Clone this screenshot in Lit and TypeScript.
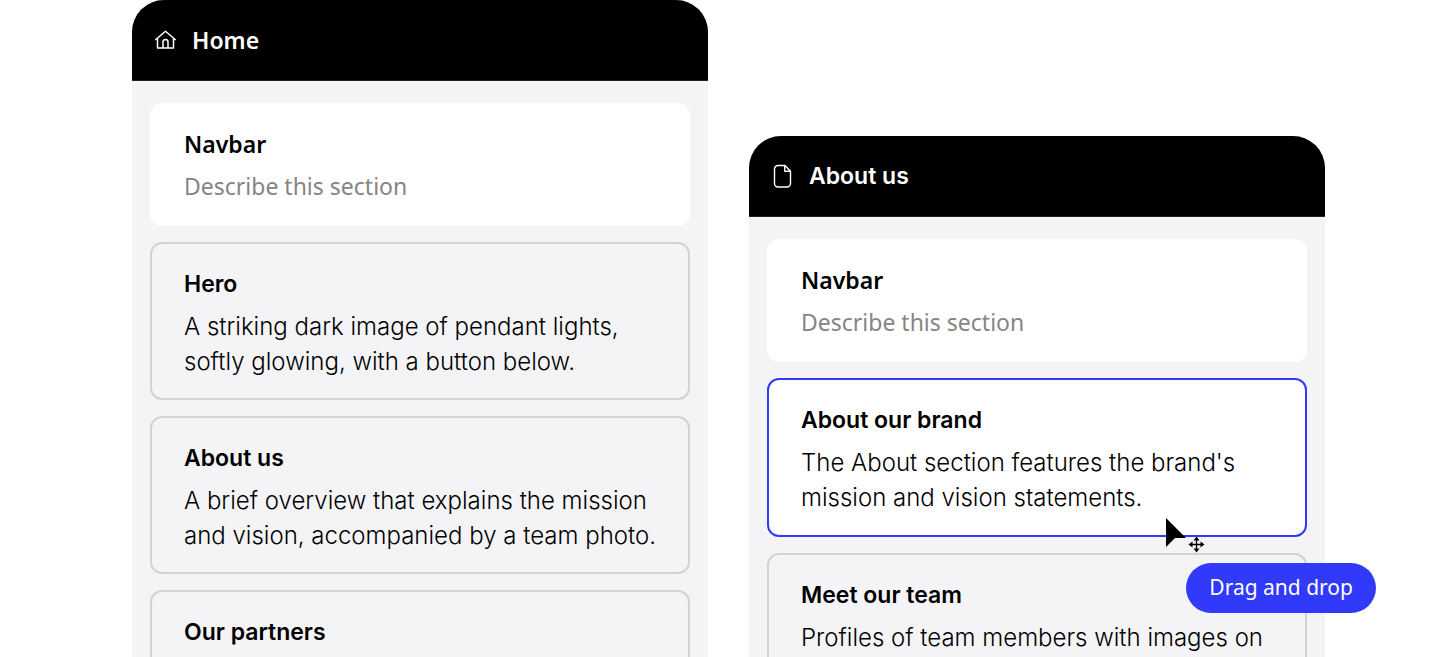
import { LitElement, html, css, svg, nothing } from "lit";
import { customElement, property } from "lit/decorators.js";
import { classMap } from "lit/directives/class-map.js";

interface Section {
  title: string;
  text?: string;
  state?: "empty" | "active";
}

const homeIcon = svg`<svg class="icon" viewBox="0 0 24 24" width="24" height="24" aria-hidden="true" fill="none" stroke="currentColor" stroke-width="1.5" stroke-linejoin="round">
  <path d="M1.300 12 11.500 3.200l10.200 8.800"/>
  <path d="M3.500 10.400v9.700h16v-9.700"/>
  <path d="M9 20.100v-6a2.500 2.500 0 0 1 5 0v6"/>
</svg>`;

const fileIcon = svg`<svg class="icon" viewBox="0 0 24 24" width="24" height="24" aria-hidden="true" fill="none" stroke="currentColor" stroke-width="1.400" stroke-linejoin="round">
  <path d="M14 1.500H7a3.500 3.500 0 0 0-3.500 3.500v14.500a3.500 3.500 0 0 0 3.500 3.500h9a3.500 3.500 0 0 0 3.500-3.500V7.300z"/>
  <path d="M13.700 1.500v5.800h5.800"/>
</svg>`;

@customElement("section-card")
class SectionCard extends LitElement {
  @property({ attribute: false }) section!: Section;

  static styles = css`
    :host {
      display: block;
    }
    .card {
      position: relative;
      box-sizing: border-box;
      padding: 22px 24px 19px 32px;
      border: 2px solid #d2d2d2;
      border-radius: 12px;
      color: #000;
      font: 350 24px/35px Inter, sans-serif;
    }
    .empty {
      padding-bottom: 20px;
      border-color: #fff;
      background: #fff;
      font-family: "Noto Sans", sans-serif;
      font-weight: 400;
    }
    .active {
      padding-bottom: 20px;
      border-color: #3139fb;
      background: #fff;
    }
    .title {
      margin: 0 0 6px;
      font-size: 23px;
      line-height: 37px;
      font-weight: 600;
    }
    .text {
      margin: 0;
    }
    .empty .title {
      margin-bottom: 7px;
      line-height: 35px;
    }
    .empty .text {
      color: #858585;
      font-size: 23px;
    }
  `;

  render() {
    const { title, text, state } = this.section;
    return html`<article class=${classMap({ card: true, empty: state === "empty", active: state === "active" })}>
      <h3 class="title">${title}</h3>
      ${text ? html`<p class="text">${text}</p>` : nothing}
      <slot></slot>
    </article>`;
  }
}

@customElement("app-root")
class AppRoot extends LitElement {
  static styles = css`
    :host {
      display: block;
      height: 100vh;
      overflow: hidden;
      background: #fff;
      font-family: Inter, sans-serif;
    }
    .board {
      display: grid;
      grid-template-columns: 1fr 1fr;
      gap: 41px;
      height: 100%;
      padding: 0 131px 0 132px;
      box-sizing: border-box;
    }
    .page {
      min-width: 0;
      background: #f4f4f6;
      border-radius: 32px 32px 0 0;
    }
    .lowered {
      margin-top: 136px;
    }
    .head {
      display: flex;
      align-items: center;
      gap: 14px;
      padding: 22px;
      border-bottom: 1px solid #222;
      border-radius: 32px 32px 0 0;
      background: #000;
      color: #fff;
    }
    .name {
      margin: 0;
      font-size: 23px;
      line-height: 36px;
      font-weight: 600;
    }
    .noto {
      font-family: "Noto Sans", sans-serif;
    }
    .icon {
      flex: none;
    }
    .list {
      display: flex;
      flex-direction: column;
      gap: 16px;
      padding: 22px 18px;
    }
    .drag {
      position: absolute;
      top: 138px;
      right: -71px;
      display: flex;
      flex-direction: column;
      z-index: 1;
    }
    .cursor {
      display: block;
      margin-left: -21px;
    }
    .pill {
      border: 0;
      border-radius: 25px;
      padding: 6px 23px 8px;
      background: #3139fb;
      color: #fff;
      font: 400 21px/36px "Noto Sans", sans-serif;
      white-space: nowrap;
    }
  `;

  private home: Section[] = [
    { title: "Navbar", text: "Describe this section", state: "empty" },
    { title: "Hero", text: "A striking dark image of pendant lights, softly glowing, with a button below." },
    { title: "About us", text: "A brief overview that explains the mission and vision, accompanied by a team photo." },
    { title: "Our partners" },
  ];

  private about: Section[] = [
    { title: "Navbar", text: "Describe this section", state: "empty" },
    { title: "About our brand", text: "The About section features the brand's mission and vision statements.", state: "active" },
    { title: "Meet our team", text: "Profiles of team members with images on" },
  ];

  private dragHint() {
    return html`<div class="drag">
      <svg class="cursor" viewBox="0 0 46 45" width="46" height="45" aria-hidden="true">
        <path d="M1 0v29l9-9h11z"/>
        <path d="M31.500 20v13M25 26.500h13" stroke="#000" stroke-width="1.300"/>
        <path d="M31.500 18.500l3 4h-6zM31.500 34.500l3-4h-6zM23.500 26.500l4-3v6zM39.500 26.500l-4-3v6z"/>
      </svg>
      <button class="pill" type="button">Drag and drop</button>
    </div>`;
  }

  private cards(sections: Section[]) {
    return html`<div class="list">
      ${sections.map((s) => html`<section-card .section=${s}>${s.state === "active" ? this.dragHint() : nothing}</section-card>`)}
    </div>`;
  }

  render() {
    return html`<main class="board">
      <section class="page">
        <header class="head">${homeIcon}<h2 class="name noto">Home</h2></header>
        ${this.cards(this.home)}
      </section>
      <section class="page lowered">
        <header class="head">${fileIcon}<h2 class="name">About us</h2></header>
        ${this.cards(this.about)}
      </section>
    </main>`;
  }
}
